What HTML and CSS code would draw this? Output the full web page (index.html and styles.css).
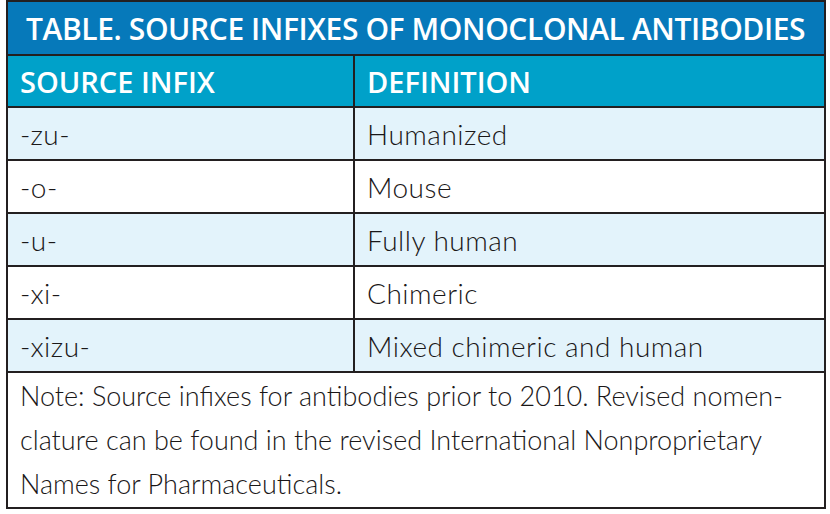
FILE: index.html
```html
<!DOCTYPE html>
<html>
<head>
<meta charset="utf-8">
<link rel="stylesheet" href="styles.css">
</head>
<body>
<div class="frame">
  <div class="title">TABLE. SOURCE INFIXES OF MONOCLONAL ANTIBODIES</div>
  <div class="grid">
    <div class="cell head">SOURCE INFIX</div>
    <div class="cell head right">DEFINITION</div>
    <div class="cell alt">-zu-</div>
    <div class="cell alt right">Humanized</div>
    <div class="cell">-o-</div>
    <div class="cell right">Mouse</div>
    <div class="cell alt">-u-</div>
    <div class="cell alt right">Fully human</div>
    <div class="cell">-xi-</div>
    <div class="cell right">Chimeric</div>
    <div class="cell alt">-xizu-</div>
    <div class="cell alt right">Mixed chimeric and human</div>
  </div>
  <div class="note">Note: Source infixes for antibodies prior to 2010. Revised nomen-<br>clature can be found in the revised International Nonproprietary<br>Names for Pharmaceuticals.</div>
</div>
</body>
</html>
```
FILE: styles.css
```css
html, body {
  margin: 0;
  padding: 0;
  background: #ffffff;
}
.frame {
  margin: 0 0 0 6px;
  width: 816px;
  border: 2px solid #231f20;
  font-family: "Lato", "Open Sans", sans-serif;
  font-weight: 300;
  color: #1a1718;
}
.title {
  height: 52px;
  background: #0679ba;
  color: #ffffff;
  font-family: "Open Sans", sans-serif;
  font-weight: 600;
  font-size: 30px;
  line-height: 54px;
  padding-left: 18px;
  border-bottom: 2px solid #231f20;
  white-space: nowrap;
  letter-spacing: -0.4px;
}
.grid {
  display: grid;
  grid-template-columns: 345px 1fr;
}
.cell {
  height: 51px;
  line-height: 53px;
  padding-left: 12px;
  font-size: 28px;
  letter-spacing: 0.5px;
  border-bottom: 2px solid #231f20;
  white-space: nowrap;
}
.cell.right {
  border-left: 2px solid #231f20;
  padding-left: 12px;
}
.cell.head {
  height: 50px;
  line-height: 52px;
  background: #00a1c9;
  color: #ffffff;
  font-family: "Open Sans", sans-serif;
  font-weight: 600;
  font-size: 29px;
  letter-spacing: 0;
}
.cell.alt {
  background: #e3f3fb;
}
.note {
  padding: 1px 12px 1px 12px;
  font-size: 27px;
  line-height: 44px;
  white-space: nowrap;
}
```
